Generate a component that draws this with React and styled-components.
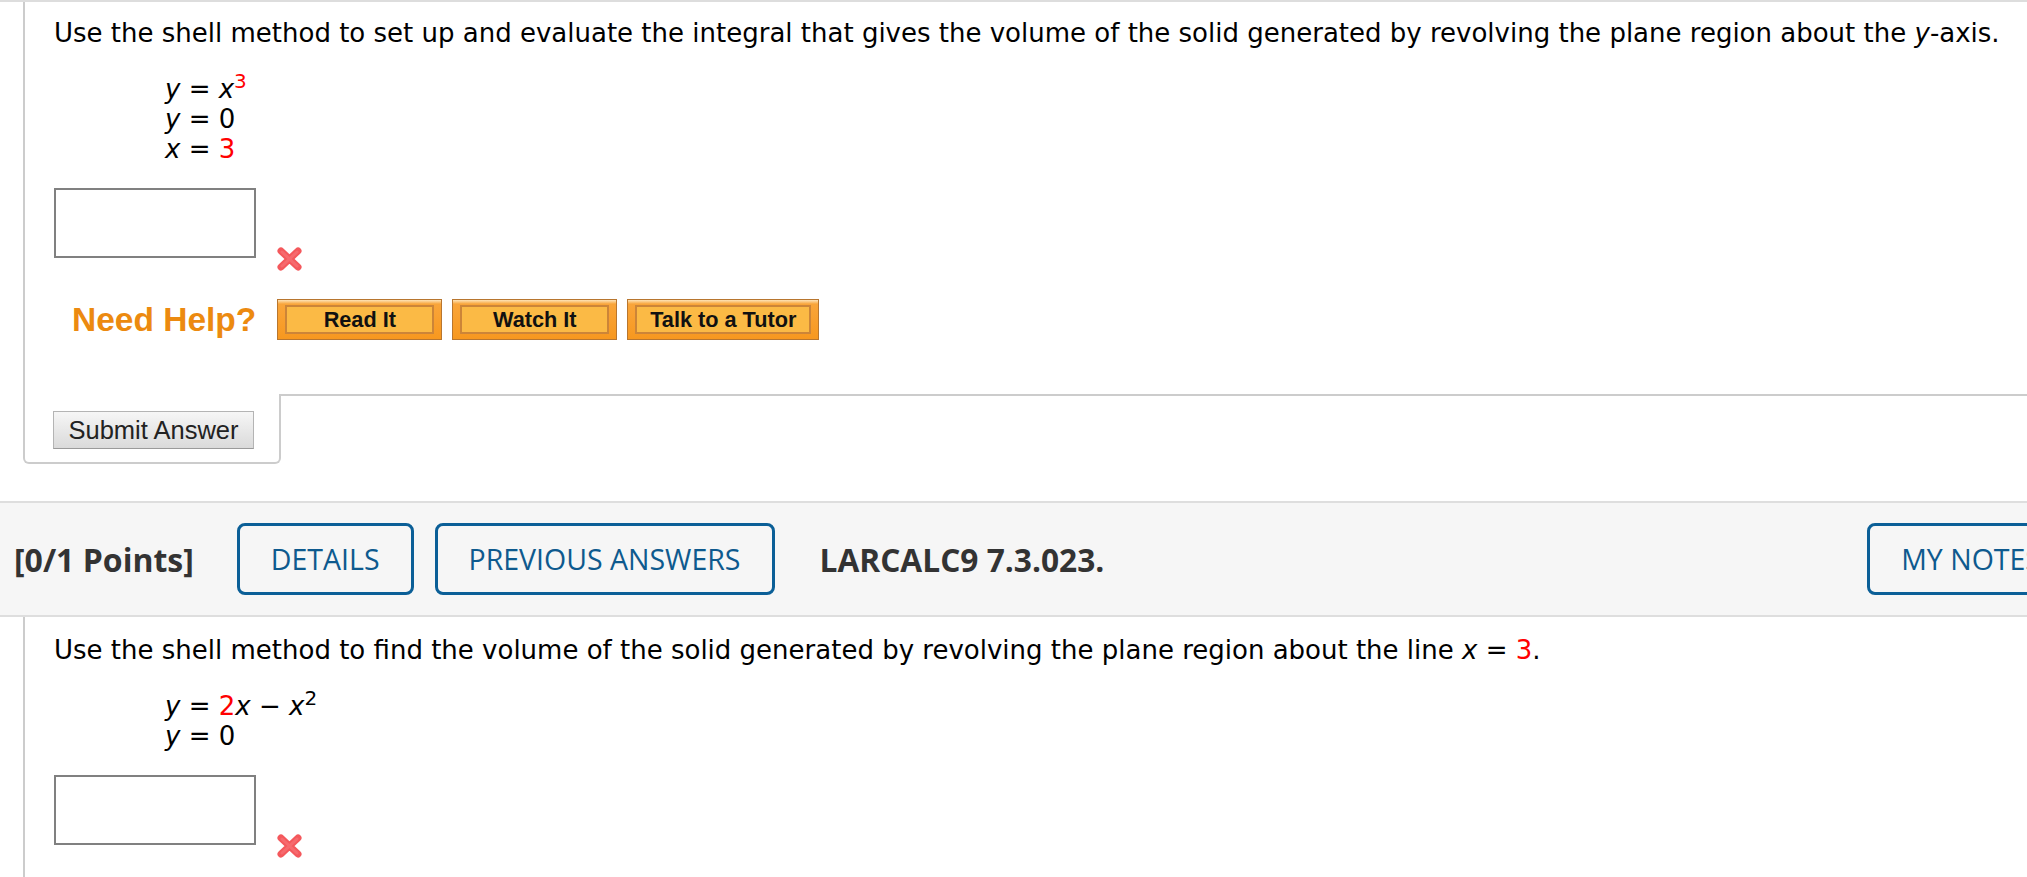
import React from "react";
import styled, { createGlobalStyle } from "styled-components";

const GlobalStyle = createGlobalStyle`
  html, body {
    margin: 0;
    padding: 0;
    overflow: hidden;
    background: #ffffff;
  }
  body {
    font-family: "DejaVu Sans", Verdana, sans-serif;
    color: #000;
  }
`;

const Page = styled.div`
  width: 2089px;
  border-top: 2px solid #dddddd;
`;

const QuestionCard = styled.section`
  margin-left: 23px;
`;

const QuestionBody = styled.div`
  border-left: 2px solid #cccccc;
  padding: ${(p) => p.$top}px 0 ${(p) => p.$bottom || 0}px 29px;
`;

const Prompt = styled.p`
  margin: 0;
  font-family: "DejaVu Sans", Verdana, sans-serif;
  font-size: 26px;
  line-height: 30px;
  color: #000;
  white-space: nowrap;
`;

const Var = styled.i`
  font-style: italic;
`;

const Red = styled.span`
  color: #ff0000;
`;

const Equations = styled.div`
  margin: 26px 0 0 111px;
  font-size: 26px;
  line-height: 30px;
`;

const EqLine = styled.div`
  white-space: nowrap;
`;

const Sup = styled.sup`
  font-size: 20px;
  line-height: 0;
  vertical-align: 10px;
  color: ${(p) => p.$color || "inherit"};
`;

const AnswerRow = styled.div`
  display: flex;
  align-items: flex-end;
  margin-top: 24px;
`;

const AnswerBox = styled.div`
  width: 198px;
  height: 66px;
  border: 2px solid #808080;
  background: #fff;
`;

const WrongMark = styled.svg`
  margin: 0 0 -14px 20px;
  width: 27px;
  height: 26px;
`;

const HelpRow = styled.div`
  display: flex;
  align-items: center;
  margin-top: 41px;
  margin-left: 18px;
`;

const HelpLabel = styled.span`
  font-family: "Liberation Sans", Arial, sans-serif;
  font-weight: bold;
  font-size: 33.5px;
  color: #ec8a10;
  margin-right: 21px;
  line-height: 40px;
  white-space: nowrap;
`;

const HelpButton = styled.button`
  display: inline-flex;
  padding: 5px 7px;
  margin-right: 10px;
  border: 1px solid #b8762f;
  background: linear-gradient(#fde3b8 0px, #f9a53a 4px, #f7981f 100%);
  cursor: pointer;
`;

const HelpFace = styled.span`
  display: block;
  min-width: ${(p) => p.$minWidth || 149}px;
  padding: 0 10px;
  box-sizing: border-box;
  height: 29px;
  border: 2px solid #cc8538;
  background: #fbba45;
  font-family: "Liberation Sans", Arial, sans-serif;
  font-weight: bold;
  font-size: 21.7px;
  line-height: 25px;
  color: #111;
  text-align: center;
  white-space: nowrap;
`;

const Footer = styled.div`
  display: flex;
`;

const SubmitTab = styled.div`
  width: 226px;
  height: 51px;
  border: 2px solid #cccccc;
  border-top: none;
  border-radius: 0 0 6px 6px;
  padding: 17px 0 0 28px;
`;

const TabFiller = styled.div`
  flex: 1;
  border-top: 2px solid #cccccc;
`;

const SubmitButton = styled.button`
  width: 201px;
  height: 38px;
  padding: 0;
  border: 1px solid #b4b4b4;
  border-bottom-color: #9a9a9a;
  background: linear-gradient(#f6f6f6, #dadada);
  font-family: "Liberation Sans", Arial, sans-serif;
  font-size: 25.5px;
  color: #222;
  cursor: pointer;
`;

const HeaderBar = styled.header`
  display: flex;
  align-items: center;
  margin-top: 37px;
  padding: 20px 14px 20px 14px;
  background: #f6f6f6;
  border-top: 2px solid #dedede;
  border-bottom: 2px solid #dedede;
`;

const Points = styled.span`
  font-family: "Open Sans", sans-serif;
  font-weight: 700;
  font-size: 32px;
  color: #333;
  margin-right: 43px;
  white-space: nowrap;
`;

const OutlineButton = styled.button`
  height: 72px;
  padding: 0 31px;
  margin-right: ${(p) => p.$gap ?? 21}px;
  margin-left: ${(p) => (p.$pushRight ? "auto" : "0")};
  border: 3px solid #0b5f97;
  border-radius: 8px;
  background: transparent;
  font-family: "Open Sans", sans-serif;
  font-size: 28.5px;
  color: #0e5a8e;
  text-transform: uppercase;
  white-space: nowrap;
  cursor: pointer;
`;

const ProblemId = styled.span`
  margin-left: 45px;
  font-family: "Open Sans", sans-serif;
  font-weight: 700;
  font-size: 31.7px;
  color: #333;
  white-space: nowrap;
`;

function XMark() {
  return (
    <WrongMark viewBox="0 0 27 26">
      <defs>
        <filter id="soft" x="-20%" y="-20%" width="140%" height="140%">
          <feGaussianBlur stdDeviation="0.6" />
        </filter>
      </defs>
      <g filter="url(#soft)" strokeLinecap="round">
        <path d="M5 5 L22 21 M22 5 L5 21" stroke="#f4585c" strokeWidth="7" />
        <path d="M6 6 L21 20 M21 6 L6 20" stroke="#f97a7d" strokeWidth="3" opacity="0.55" />
      </g>
    </WrongMark>
  );
}

export default function App() {
  return (
    <>
      <GlobalStyle />
      <Page>
        <QuestionCard>
          <QuestionBody $top={16} $bottom={54}>
            <Prompt>
              Use the shell method to set up and evaluate the integral that gives the volume of the solid
              generated by revolving the plane region about the <Var>y</Var>-axis.
            </Prompt>
            <Equations>
              <EqLine>
                <Var>y</Var> = <Var>x</Var>
                <Sup $color="#ff0000">3</Sup>
              </EqLine>
              <EqLine>
                <Var>y</Var> = 0
              </EqLine>
              <EqLine>
                <Var>x</Var> = <Red>3</Red>
              </EqLine>
            </Equations>
            <AnswerRow>
              <AnswerBox />
              <XMark />
            </AnswerRow>
            <HelpRow>
              <HelpLabel>Need Help?</HelpLabel>
              <HelpButton>
                <HelpFace>Read It</HelpFace>
              </HelpButton>
              <HelpButton>
                <HelpFace>Watch It</HelpFace>
              </HelpButton>
              <HelpButton>
                <HelpFace $minWidth={176}>Talk to a Tutor</HelpFace>
              </HelpButton>
            </HelpRow>
          </QuestionBody>
          <Footer>
            <SubmitTab>
              <SubmitButton>Submit Answer</SubmitButton>
            </SubmitTab>
            <TabFiller />
          </Footer>
        </QuestionCard>

        <HeaderBar>
          <Points>[0/1 Points]</Points>
          <OutlineButton>Details</OutlineButton>
          <OutlineButton $gap={0}>Previous Answers</OutlineButton>
          <ProblemId>LARCALC9 7.3.023.</ProblemId>
          <OutlineButton $pushRight $gap={0}>My Notes</OutlineButton>
        </HeaderBar>

        <QuestionCard>
          <QuestionBody $top={18} $bottom={200}>
            <Prompt>
              Use the shell method to find the volume of the solid generated by revolving the plane region
              about the line <Var>x</Var> = <Red>3</Red>.
            </Prompt>
            <Equations>
              <EqLine>
                <Var>y</Var> = <Red>2</Red>
                <Var>x</Var> − <Var>x</Var>
                <Sup>2</Sup>
              </EqLine>
              <EqLine>
                <Var>y</Var> = 0
              </EqLine>
            </Equations>
            <AnswerRow>
              <AnswerBox />
              <XMark />
            </AnswerRow>
          </QuestionBody>
        </QuestionCard>
      </Page>
    </>
  );
}
